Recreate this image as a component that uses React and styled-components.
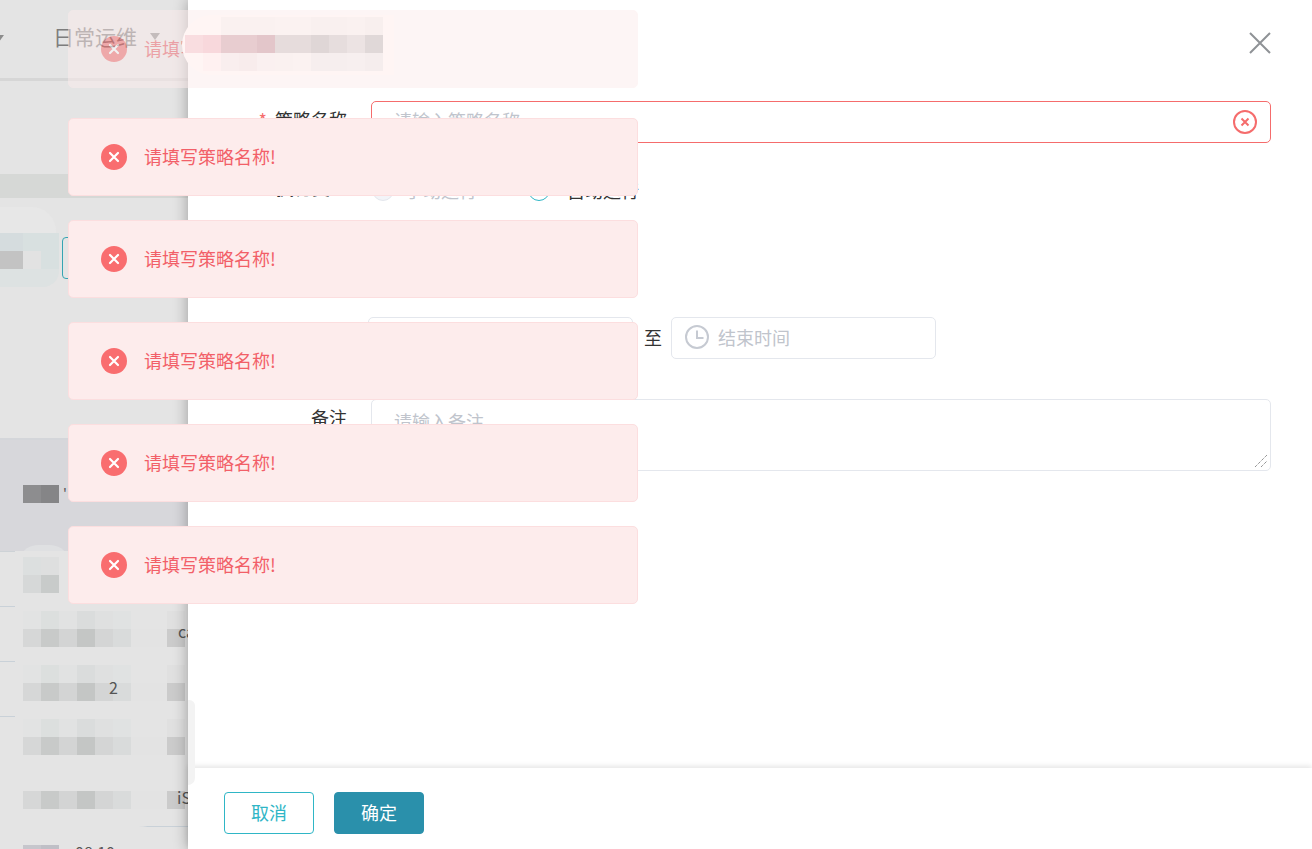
import styled, { createGlobalStyle } from 'styled-components';

const FONT = '"Noto Sans CJK SC", "Liberation Sans", sans-serif';
const MESSAGE = '请填写策略名称!';

const GlobalStyle = createGlobalStyle`
	html,
	body {
		margin: 0;
		height: 849px;
		overflow: hidden;
		background: #fff;
		font-family: ${FONT};
	}
	* {
		box-sizing: border-box;
	}
`;

const Page = styled.div`
	display: flex;
	width: 1312px;
	height: 849px;
	position: relative;
	overflow: hidden;
`;

/* page behind the drawer, dimmed by the mask */
const Backdrop = styled.div`
	position: relative;
	flex: 0 0 188px;
	height: 849px;
	background: #e4e4e4;
	color: #7d7d7d;
	white-space: nowrap;
`;

const Tabs = styled.div`
	display: flex;
	align-items: center;
	height: 81px;
	padding: 0 0 7px 53px;
	border-bottom: 3px solid #d6d6d6;
	font-size: 21px;
`;

const TabArrow = styled.i`
	width: 0;
	height: 0;
	margin: 2px 0 0 13px;
	border: 5.5px solid transparent;
	border-top: 7px solid #8c8c8c;
	border-bottom: 0;
`;

const CutArrow = styled(TabArrow)`
	position: absolute;
	left: -6px;
	top: 35px;
	margin: 0;
`;

const Band = styled.div`
	height: 24px;
	margin-top: 93px;
	background: #d6d8d6;
`;

const ToolRow = styled.div`
	height: 42px;
	margin-top: 39px;
	padding-left: 62px;
`;

const GhostButton = styled.div`
	width: 60px;
	height: 42px;
	border: 1px solid #35a4b2;
	border-radius: 4px;
`;

const HeadLine = styled.div`
	height: 2px;
	margin-top: 159px;
	background: #d4d6da;
`;

const ActiveRow = styled.div`
	display: flex;
	align-items: center;
	height: 112px;
	padding: 0 0 6px 63px;
	background: #d7d7db;
	border-bottom: 1px solid #cdd2d6;
	color: #555;
	font-size: 14px;
`;

const TableRow = styled.div`
	height: 55px;
	border-bottom: 1px solid #c9d1d8;
`;

const LastRow = styled.div`
	padding: 15px 0 0 75px;
	color: #555;
	font-size: 16px;
	line-height: 20px;
`;

const Cover = styled.div`
	position: absolute;
	left: ${(p) => p.$left}px;
	top: ${(p) => p.$top}px;
	width: ${(p) => p.$width}px;
	height: ${(p) => p.$height}px;
	background: ${(p) => p.$color};
	border-radius: ${(p) => p.$radius};
`;

const Remnant = styled.span`
	position: absolute;
	left: ${(p) => p.$left}px;
	top: ${(p) => p.$top}px;
	color: #555;
	font-size: 16px;
	line-height: 18px;
`;

const MosaicGrid = styled.div`
	position: absolute;
	left: ${(p) => p.$left}px;
	top: ${(p) => p.$top}px;
	display: grid;
	grid-template-columns: ${(p) => p.$columns};
	grid-auto-rows: 18px;
`;

const MosaicCell = styled.div`
	background: ${(p) => p.$color};
`;

function Mosaic({ left, top, rows, columns }) {
	const count = rows[0].length;
	return (
		<MosaicGrid $left={left} $top={top} $columns={columns || `repeat(${count}, 18px)`}>
			{rows.flat().map((color, i) => (
				<MosaicCell key={i} $color={color} />
			))}
		</MosaicGrid>
	);
}

/* drawer */
const Drawer = styled.div`
	position: relative;
	flex: 1;
	display: flex;
	flex-direction: column;
	height: 849px;
	background: #fff;
	box-shadow: 0 0 14px rgba(0, 0, 0, 0.32);
`;

const DrawerHead = styled.div`
	display: flex;
	justify-content: flex-end;
	height: 101px;
	padding: 32px 41px 0 0;
	color: #8f9296;
`;

const Form = styled.div`
	flex: 1;
	padding-right: 41px;
`;

const Row = styled.div`
	display: flex;
	align-items: flex-start;
	margin-top: ${(p) => p.$top || 0}px;
`;

const Label = styled.label`
	flex: 0 0 159px;
	padding-right: ${(p) => p.$pad || 0}px;
	height: 42px;
	line-height: 36px;
	text-align: right;
	font-size: 18px;
	color: #333;
`;

const Required = styled.span`
	margin-right: 8px;
	color: #f56c6c;
`;

const InputBox = styled.div`
	flex: 1;
	display: flex;
	align-items: center;
	justify-content: space-between;
	height: 42px;
	margin-left: 24px;
	padding: 0 13px 4px 22px;
	border: 1px solid ${(p) => (p.$error ? '#f56c6c' : '#e4e7ed')};
	border-radius: 5px;
	font-size: 18px;
	color: #c0c4cc;
`;

const ClearIcon = styled.span`
	display: flex;
	margin-top: 4px;
	color: #f56c6c;
`;

const AreaBox = styled(InputBox)`
	position: relative;
	align-items: flex-start;
	height: 72px;
	padding-top: 8px;
`;

const ResizeGrip = styled.svg`
	position: absolute;
	right: 2px;
	bottom: 2px;
`;

const RadioGroup = styled.div`
	display: flex;
	align-items: center;
	height: 42px;
	margin-left: 25px;
	font-size: 18px;
	white-space: nowrap;
`;

const RadioItem = styled.div`
	display: flex;
	align-items: center;
	width: ${(p) => p.$width}px;
	color: ${(p) => (p.$disabled ? '#c0c4cc' : '#333')};
`;

const RadioDot = styled.i`
	flex: none;
	width: 22px;
	height: 22px;
	margin-right: ${(p) => p.$gap}px;
	border-radius: 50%;
	border: 1px solid ${(p) => (p.$disabled ? '#e4e7ed' : '#2fb6c6')};
	background: ${(p) => (p.$disabled ? '#f3f4f8' : '#fff')};
`;

const TimeGroup = styled.div`
	display: flex;
	align-items: center;
	margin-left: 21px;
	font-size: 18px;
	color: #333;
`;

const TimeBox = styled.div`
	display: flex;
	align-items: center;
	gap: 9px;
	width: 265px;
	height: 42px;
	padding: 0 13px 3px;
	border: 1px solid #e4e7ed;
	border-radius: 5px;
	color: #c0c4cc;
`;

const TimeTo = styled.span`
	margin: 0 9px 3px 11px;
`;

const Footer = styled.div`
	display: flex;
	gap: 20px;
	height: 81px;
	padding: 24px 0 0 36px;
	box-shadow: 0 -2px 5px rgba(0, 0, 0, 0.1);
`;

const FooterButton = styled.button`
	width: 90px;
	height: 42px;
	padding: 0 0 2px;
	border: 1px solid ${(p) => (p.$primary ? '#2a90ab' : '#2fb6c6')};
	border-radius: 4px;
	background: ${(p) => (p.$primary ? '#2a90ab' : '#fff')};
	color: ${(p) => (p.$primary ? '#fff' : '#2fb6c6')};
	font-family: ${FONT};
	font-size: 18px;
`;

/* message stack */
const Messages = styled.div`
	position: absolute;
	left: 68px;
	top: 10px;
	display: flex;
	flex-direction: column;
	gap: 24px;
	width: 570px;
`;

const Message = styled.div`
	display: flex;
	align-items: center;
	gap: 17px;
	height: 78px;
	margin-bottom: ${(p) => (p.$leaving ? 6 : 0)}px;
	padding-left: 32px;
	background: #fdecec;
	border: 1px solid ${(p) => (p.$leaving ? '#fdecec' : '#fcdedf')};
	border-radius: 5px;
	opacity: ${(p) => (p.$leaving ? 0.5 : 1)};
	color: #f25f68;
	font-size: 18px;
	line-height: 26px;
`;

const MessageText = styled.span`
	margin-bottom: 2px;
`;

function ErrorIcon() {
	return (
		<svg width="26" height="26" viewBox="0 0 26 26" style={{ flex: 'none' }}>
			<circle cx="13" cy="13" r="13" fill="#f96d6f" />
			<path d="M9 9l8 8M17 9l-8 8" stroke="#fff" strokeWidth="2.2" strokeLinecap="round" />
		</svg>
	);
}

function ClockIcon() {
	return (
		<svg width="24" height="24" viewBox="0 0 24 24" fill="none" stroke="#c6cad2" strokeWidth="2" style={{ flex: 'none' }}>
			<circle cx="12" cy="12" r="11" />
			<path d="M12 5.5V13h6.5" />
		</svg>
	);
}

const TOP_ROWS = [
	['#fff6f5', '#fff5f4', '#faf1f0', '#faf1f0', '#faf1f0', '#fbf2f1', '#fbf2f1', '#f9f0ef', '#f9f0ef', '#faf1f0', '#f8efee'],
	['#f9dde0', '#f8d8dc', '#e8cdd0', '#e8cdd0', '#e3c6ca', '#e6dcdc', '#e6dcdc', '#dfd6d6', '#e6dddd', '#ece3e3', '#e0d8d8'],
	['#fff3f3', '#fff1f1', '#f9eeee', '#f8ecec', '#faf0f0', '#faf1f0', '#fbf2f1', '#f6eeee', '#f6eeee', '#f7efef', '#f5eded'],
];

const TABLE_ROWS = [
	['#e2e3e3', '#dcdfde', '#e1e2e2', '#dadcdc', '#dfe0e0', '#e0e2e2', '#e4e4e4', '#e4e4e4', '#e0e0e0'],
	['#d6d7d7', '#c8cac9', '#d3d4d4', '#c4c6c5', '#d4d5d5', '#d9dbdb', '#e3e3e3', '#e3e3e3', '#cbcbcb'],
];

function App() {
	return (
		<>
			<GlobalStyle />
			<Page>
				<Backdrop>
					<CutArrow />
					<Tabs>
						日常运维
						<TabArrow />
					</Tabs>
					<Band />
					<ToolRow>
						<GhostButton />
					</ToolRow>
					<HeadLine />
					<ActiveRow>'</ActiveRow>
					<TableRow />
					<TableRow />
					<TableRow />
					<TableRow />
					<TableRow />
					<LastRow>08:10</LastRow>

					<Cover $left={0} $top={207} $width={56} $height={30} $color="#e7e7e7" $radius="0 24px 0 0" />
					<Cover $left={0} $top={233} $width={59} $height={54} $color="#dde2e2" $radius="0 0 16px 0" />
					<Mosaic
						left={0}
						top={233}
						columns="23px 18px 18px"
						rows={[
							['#d5dcde', '#d8e0e0', '#d8e0e0'],
							['#c3c3c3', '#e2e2e2', '#d8e0e0'],
						]}
					/>
					<Mosaic left={23} top={485} rows={[['#8d8d8f', '#858587']]} />

					<Cover $left={18} $top={545} $width={52} $height={20} $color="#dfe0e2" $radius="26px 26px 0 0" />
					<Cover $left={15} $top={551} $width={173} $height={205} $color="#e4e4e4" $radius="0" />
					<Cover $left={0} $top={755} $width={188} $height={72} $color="#e4e4e4" $radius="0 0 50px 0" />
					<Mosaic left={23} top={557} rows={[['#dcdfdf', '#dedfdf'], ['#d6d8d8', '#c8cbca']]} />
					<Mosaic left={23} top={611} rows={TABLE_ROWS} />
					<Mosaic left={23} top={665} rows={TABLE_ROWS} />
					<Mosaic left={23} top={719} rows={TABLE_ROWS} />
					<Mosaic left={23} top={791} rows={[TABLE_ROWS[1]]} />
					<Mosaic left={23} top={845} rows={[['#c6c6cc', '#bfbfc6']]} />
					<Remnant $left={178} $top={622}>ca</Remnant>
					<Remnant $left={109} $top={678}>2</Remnant>
					<Remnant $left={177} $top={788}>iS</Remnant>
				</Backdrop>

				<Drawer>
					<DrawerHead>
						<svg width="22" height="22" viewBox="0 0 22 22" fill="none" stroke="currentColor" strokeWidth="2">
							<path d="M1 1l20 20M21 1L1 21" />
						</svg>
					</DrawerHead>
					<Form>
						<Row>
							<Label>
								<Required>*</Required>策略名称
							</Label>
							<InputBox $error>
								请输入策略名称
								<ClearIcon>
									<svg width="24" height="24" viewBox="0 0 24 24" fill="none" stroke="currentColor" strokeWidth="2">
										<circle cx="12" cy="12" r="11" />
										<path d="M8.5 8.5l7 7M15.5 8.5l-7 7" />
									</svg>
								</ClearIcon>
							</InputBox>
						</Row>
						<Row $top={26}>
							<Label $pad={17}>执行类</Label>
							<RadioGroup>
								<RadioItem $disabled $width={156}>
									<RadioDot $disabled $gap={11} />
									手动运行
								</RadioItem>
								<RadioItem $width={110}>
									<RadioDot $gap={17} />
									自动运行
								</RadioItem>
							</RadioGroup>
						</Row>
						<Row $top={106}>
							<Label>时间</Label>
							<TimeGroup>
								<TimeBox>
									<ClockIcon />
									开始时间
								</TimeBox>
								<TimeTo>至</TimeTo>
								<TimeBox>
									<ClockIcon />
									结束时间
								</TimeBox>
							</TimeGroup>
						</Row>
						<Row $top={40}>
							<Label>备注</Label>
							<AreaBox>
								请输入备注
								<ResizeGrip width="14" height="14" viewBox="0 0 14 14" stroke="#666" strokeWidth="1" strokeDasharray="1 1">
									<path d="M1 13L13 1M7 13l6-6" />
								</ResizeGrip>
							</AreaBox>
						</Row>
					</Form>
					<Footer>
						<FooterButton>取消</FooterButton>
						<FooterButton $primary>确定</FooterButton>
					</Footer>
				</Drawer>

				<Messages>
					<Message $leaving>
						<ErrorIcon />
						<MessageText>{MESSAGE}</MessageText>
					</Message>
					<Message>
						<ErrorIcon />
						<MessageText>{MESSAGE}</MessageText>
					</Message>
					<Message>
						<ErrorIcon />
						<MessageText>{MESSAGE}</MessageText>
					</Message>
					<Message>
						<ErrorIcon />
						<MessageText>{MESSAGE}</MessageText>
					</Message>
					<Message>
						<ErrorIcon />
						<MessageText>{MESSAGE}</MessageText>
					</Message>
					<Message>
						<ErrorIcon />
						<MessageText>{MESSAGE}</MessageText>
					</Message>
				</Messages>

				<Cover $left={182} $top={15} $width={212} $height={60} $color="#fff5f4" $radius="30px 0 0 30px" />
				<Mosaic left={203} top={17} rows={TOP_ROWS.map((row) => row.slice(1))} />
				<Mosaic left={185} top={35} rows={[[TOP_ROWS[1][0]]]} />
				<Cover $left={188} $top={700} $width={7} $height={85} $color="#f3f3f3" $radius="0 8px 10px 0" />
			</Page>
		</>
	);
}

export default App;
